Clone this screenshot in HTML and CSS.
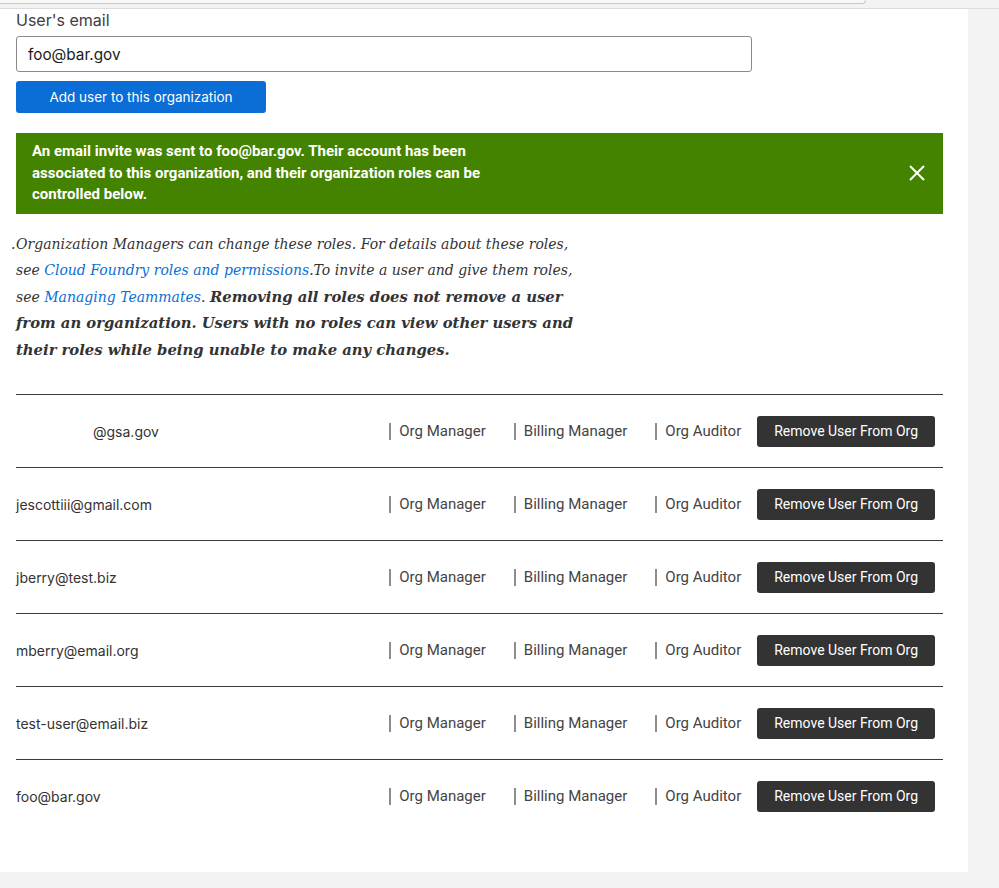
FILE: index.html
```html
<!DOCTYPE html>
<html lang="en">
<head>
<meta charset="utf-8">
<title>Organization users</title>
<link rel="stylesheet" href="styles.css">
</head>
<body>
<div class="topbar"><div class="topbar-field"></div></div>
<main class="panel">
  <label class="field-label" for="email">User's email</label>
  <input id="email" class="text-input" type="text" value="foo@bar.gov">
  <button class="btn-primary" type="button">Add user to this organization</button>

  <div class="alert">
    <p class="alert-text">An email invite was sent to foo@bar.gov. Their account has been associated to this organization, and their organization roles can be controlled below.</p>
    <button class="alert-close" type="button" aria-label="Close">
      <svg width="16" height="16" viewBox="0 0 16 16"><path d="M1 1 L15 15 M15 1 L1 15" stroke="#fff" stroke-width="2" fill="none"/></svg>
    </button>
  </div>

  <p class="roles-note"><span class="stray">.</span>Organization Managers can change these roles. For details about these roles,<br>see <a href="#">Cloud Foundry roles and permissions</a>.To invite a user and give them roles,<br>see <a href="#">Managing Teammates</a>. <strong>Removing all roles does not remove a user<br>from an organization. Users with no roles can view other users and<br>their roles while being unable to make any changes.</strong></p>

  <div class="user-list">
    <div class="user-row">
      <div class="user-email offset">@gsa.gov</div>
      <div class="roles"><span class="role">Org Manager</span><span class="role">Billing Manager</span><span class="role">Org Auditor</span></div>
      <button class="btn-remove" type="button">Remove User From Org</button>
    </div>
    <div class="user-row">
      <div class="user-email">jescottiii@gmail.com</div>
      <div class="roles"><span class="role">Org Manager</span><span class="role">Billing Manager</span><span class="role">Org Auditor</span></div>
      <button class="btn-remove" type="button">Remove User From Org</button>
    </div>
    <div class="user-row">
      <div class="user-email">jberry@test.biz</div>
      <div class="roles"><span class="role">Org Manager</span><span class="role">Billing Manager</span><span class="role">Org Auditor</span></div>
      <button class="btn-remove" type="button">Remove User From Org</button>
    </div>
    <div class="user-row">
      <div class="user-email">mberry@email.org</div>
      <div class="roles"><span class="role">Org Manager</span><span class="role">Billing Manager</span><span class="role">Org Auditor</span></div>
      <button class="btn-remove" type="button">Remove User From Org</button>
    </div>
    <div class="user-row">
      <div class="user-email">test-user@email.biz</div>
      <div class="roles"><span class="role">Org Manager</span><span class="role">Billing Manager</span><span class="role">Org Auditor</span></div>
      <button class="btn-remove" type="button">Remove User From Org</button>
    </div>
    <div class="user-row">
      <div class="user-email">foo@bar.gov</div>
      <div class="roles"><span class="role">Org Manager</span><span class="role">Billing Manager</span><span class="role">Org Auditor</span></div>
      <button class="btn-remove" type="button">Remove User From Org</button>
    </div>
  </div>
</main>
</body>
</html>
```
FILE: styles.css
```css
html, body {
  margin: 0;
  padding: 0;
}
body {
  background: #f3f3f3;
  font-family: "Inter", "Open Sans", sans-serif;
  color: #333;
}
.topbar {
  height: 8px;
  background: #f3f3f3;
  border-bottom: 1px solid #dcdcdc;
}
.topbar-field {
  width: 865px;
  height: 3px;
  background: #f8f8f8;
  border-right: 1px solid #c9c9c9;
  border-bottom: 1px solid #c9c9c9;
  border-bottom-right-radius: 4px;
}
.panel {
  display: block;
  width: 968px;
  box-sizing: border-box;
  background: #fff;
  padding: 0 25px 40px 16px;
}
.field-label {
  display: block;
  font-size: 16px;
  line-height: 22px;
  color: #3d3d3d;
  margin-bottom: 5px;
}
.text-input {
  display: block;
  width: 736px;
  height: 36px;
  box-sizing: border-box;
  border: 1px solid #8a8a8a;
  border-radius: 3px;
  padding: 0 11px;
  margin: 0 0 9px;
  font-family: "Inter", "Open Sans", sans-serif;
  font-size: 15.3px;
  color: #1b1b1b;
  background: #fff;
}
.btn-primary {
  display: block;
  width: 250px;
  height: 32px;
  background: #0a6ed6;
  color: #fff;
  border: 0;
  border-radius: 3px;
  font-family: "Inter", "Open Sans", sans-serif;
  font-size: 13.5px;
  margin: 0 0 20px;
  padding: 0;
}
.alert {
  display: flex;
  align-items: center;
  justify-content: space-between;
  background: #448300;
  padding: 8px 18px 8px 16px;
}
.alert-text {
  margin: 0;
  max-width: 470px;
  font-family: "Roboto", sans-serif;
  font-weight: 700;
  font-size: 15px;
  line-height: 21.5px;
  color: #fff;
}
.alert-close {
  background: none;
  border: 0;
  padding: 0;
  width: 16px;
  height: 16px;
  display: flex;
}
.roles-note {
  margin: 17px 0 31px;
  width: 600px;
  font-family: "DejaVu Serif", serif;
  font-style: italic;
  font-size: 14px;
  line-height: 26.5px;
  color: #333;
}
.roles-note a {
  color: #0b6fd4;
  text-decoration: none;
}
.roles-note strong {
  font-size: 14.8px;
}
.stray {
  display: inline-block;
  width: 5px;
  margin-left: -5px;
}
.user-row {
  display: flex;
  align-items: center;
  height: 72px;
  border-top: 1px solid #3a3a3a;
  padding-right: 8px;
}
.user-email {
  flex: 1;
  font-size: 14px;
  color: #333;
}
.user-email.offset {
  padding-left: 77px;
}
.roles {
  display: flex;
}
.role {
  border-left: 2px solid #8d8d8d;
  padding-left: 8px;
  margin-right: 28px;
  line-height: 17px;
  font-family: "Roboto", sans-serif;
  font-size: 15px;
  color: #444;
}
.role:last-child {
  margin-right: 16px;
}
.btn-remove {
  height: 31px;
  padding: 0 17px;
  background: #333;
  color: #fff;
  border: 0;
  border-radius: 3px;
  font-family: "Roboto", sans-serif;
  font-size: 14px;
}
```
